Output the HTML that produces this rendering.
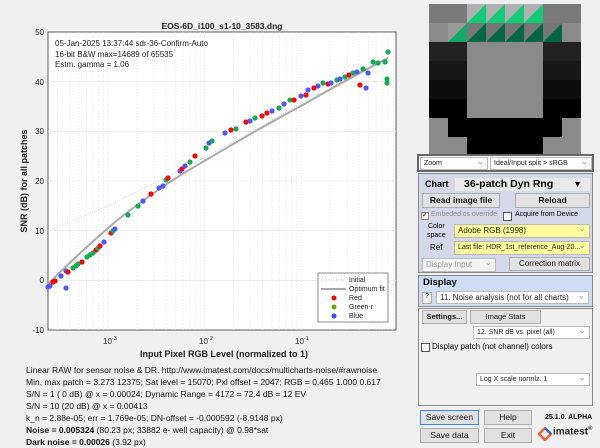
<!DOCTYPE html>
<html><head><meta charset="utf-8"><style>
*{box-sizing:border-box}
body{margin:0;width:600px;height:446px;background:#f0f0f0;font-family:"Liberation Sans",sans-serif;position:relative;overflow:hidden}
.a{position:absolute}
.dd{position:absolute;background:#fff;border:1px solid #bbb;font-size:8px;line-height:12px;padding-left:3px;color:#222}
.dd:after{content:"⌄";position:absolute;right:3px;top:-3px;color:#999;font-size:9px}
.yl{background:#ffff9e}
.btn{position:absolute;background:#e1e1e1;border:1px solid #adadad;font-size:8.5px;text-align:center;color:#111}
.t{font-size:8.5px;color:#111;line-height:10.5px}
</style></head><body>
<svg class="a" style="left:0;top:0" width="410" height="360" font-family="Liberation Sans, sans-serif">
<rect x="48" y="32" width="348" height="298" fill="#fff" stroke="#333" stroke-width="0.8"/>
<g stroke="#e2e2e2" stroke-width="0.6">
<line x1="48" x2="396" y1="81.7" y2="81.7"/><line x1="48" x2="396" y1="131.3" y2="131.3"/><line x1="48" x2="396" y1="181" y2="181"/><line x1="48" x2="396" y1="230.7" y2="230.7"/><line x1="48" x2="396" y1="280.3" y2="280.3"/>
</g>
<g stroke="#e2e2e2" stroke-width="0.6" stroke-dasharray="1.5,1.5" id="vg"></g>
<g font-size="8" fill="#222" text-anchor="end">
<text x="44" y="35">50</text><text x="44" y="85">40</text><text x="44" y="134">30</text><text x="44" y="184">20</text><text x="44" y="234">10</text><text x="44" y="283">0</text><text x="44" y="333">-10</text>
</g>
<g font-size="8" fill="#222">
<text x="103" y="344">10<tspan font-size="5.5" dy="-4">-3</tspan></text>
<text x="199" y="344">10<tspan font-size="5.5" dy="-4">-2</tspan></text>
<text x="295" y="344">10<tspan font-size="5.5" dy="-4">-1</tspan></text>
</g>
<text x="222" y="29" font-size="8.5" font-weight="bold" text-anchor="middle" fill="#222">EOS-6D_i100_s1-10_3583.dng</text>
<text x="224" y="357" font-size="9" font-weight="bold" text-anchor="middle" fill="#222">Input Pixel RGB Level (normalized to 1)</text>
<text transform="translate(27,181) rotate(-90)" font-size="9" font-weight="bold" text-anchor="middle" fill="#222">SNR (dB) for all patches</text>
<g font-size="8" fill="#222"><text x="55" y="46">05-Jan-2025 13:37:44   sdr-36-Confirm-Auto</text><text x="55" y="57">16-bit B&amp;W  max=14689 of 65535</text><text x="55" y="67">Estm. gamma = 1.06</text></g>
<path d="M53,229 L110,205 L206,157 L301,104 L388,57" fill="none" stroke="#bbb" stroke-width="0.7" stroke-dasharray="1,1.5"/>
<path d="M48,284 Q80,252 115,222 Q160,186 206,160 Q260,128 301,106 Q350,78 388,58" fill="none" stroke="#aaa" stroke-width="2"/>
<g id="pts"></g>
<rect x="318" y="273" width="70" height="49" fill="#fff" stroke="#444" stroke-width="0.6"/>
<line x1="321" x2="346" y1="280" y2="280" stroke="#bbb" stroke-dasharray="1,1.5"/>
<line x1="321" x2="346" y1="289" y2="289" stroke="#aaa" stroke-width="2"/>
<circle cx="334" cy="298" r="2.5" fill="#f00"/><circle cx="334" cy="307" r="2.5" fill="#6a0"/><circle cx="334" cy="316" r="2.5" fill="#44f"/>
<g font-size="7" fill="#222"><text x="349" y="282">Initial</text><text x="349" y="291">Optimum fit</text><text x="349" y="300">Red</text><text x="349" y="309">Green-r</text><text x="349" y="318">Blue</text></g>
</svg>
<script>
var g=document.getElementById('vg'),s='';
for(var d=-4;d<0;d++)for(var m=1;m<10;m++){var x=108+(d+3+Math.log10(m))*96.5;if(x>48&&x<396)s+='<line x1="'+x+'" x2="'+x+'" y1="32" y2="330"/>';}
g.innerHTML=s;
var P=[[48,287,'b'],[50,286,'b'],[53,282,'r'],[55,281,'r'],[61,276,'b'],[66,271,'b'],[66,288,'b'],[68,272,'r'],[73,268,'g'],[76,266,'g'],[78,264,'g'],[82,262,'r'],[87,257,'g'],[90,255,'g'],[93,253,'g'],[96,250,'r'],[98,248,'g'],[100,246,'r'],[104,242,'b'],[111,233,'r'],[113,231,'g'],[115,229,'b'],[128,215,'g'],[138,206,'g'],[143,201,'b'],[151,194,'r'],[159,188,'b'],[163,186,'b'],[166,180,'g'],[168,178,'r'],[180,171,'b'],[182,169,'r'],[185,166,'b'],[190,162,'g'],[195,156,'r'],[206,148,'g'],[209,143,'b'],[212,141,'g'],[225,133,'b'],[231,130,'r'],[236,129,'g'],[246,122,'r'],[250,121,'b'],[255,118,'g'],[262,116,'r'],[267,113,'r'],[272,111,'b'],[279,108,'g'],[284,104,'b'],[290,100,'g'],[294,100,'r'],[301,96,'b'],[306,95,'r'],[308,90,'b'],[314,88,'r'],[318,86,'b'],[323,83,'g'],[328,84,'r'],[331,83,'b'],[337,80,'g'],[340,79,'b'],[345,77,'g'],[349,75,'r'],[353,73,'g'],[357,72,'b'],[360,85,'r'],[363,69,'g'],[366,88,'b'],[368,73,'b'],[373,62,'g'],[378,63,'g'],[385,62,'g'],[388,52,'g'],[387,79,'g'],[387,83,'g']];
var c={r:'#f00',g:'#1a5',b:'#55f'},h='';
P.forEach(function(p){h+='<circle cx="'+p[0]+'" cy="'+p[1]+'" r="2.6" fill="'+c[p[2]]+'"/>';});
document.getElementById('pts').innerHTML=h;
</script>
<div class="a t" style="left:26px;top:364px;line-height:12px">Linear RAW for sensor noise &amp; DR.  http://www.imatest.com/docs/multicharts-noise/#rawnoise<br>Min, max patch = 3.273  12375;   Sat level = 15070;   Pxl offset = 2047;   RGB = 0.465  1.000  0.617<br>S/N =  1   ( 0 dB) @ x = 0.00024;   Dynamic Range = 4172 = 72.4 dB = 12 EV<br>S/N = 10 (20 dB) @ x = 0.00413<br>k_n = 2.88e-05;     err = 1.769e-05;     DN-offset = -0.000592 (-8.9148 px)<br><b>Noise = 0.005324</b> (80.23 px;  33882 e- well capacity) @ 0.98*sat<br><b>Dark noise = 0.00026</b> (3.92 px)</div>

<svg class="a" style="left:429px;top:4px" width="152" height="151">
<rect width="152" height="151" fill="#000"/>
<g fill="#7a7a7a"><rect x="0" y="0" width="38" height="19"/><rect x="114" y="0" width="38" height="19"/><rect x="0" y="19" width="19" height="19" fill="#8a8a8a"/><rect x="133" y="19" width="19" height="19" fill="#8a8a8a"/><rect x="38" y="38" width="76" height="76" fill="#8a8a8a"/><rect x="0" y="114" width="19" height="38" fill="#8a8a8a"/><rect x="133" y="114" width="19" height="38" fill="#8a8a8a"/><rect x="19" y="133" width="19" height="19" fill="#8a8a8a"/><rect x="114" y="133" width="19" height="19" fill="#8a8a8a"/></g>
<g id="tri"></g>
<g fill="#222"><rect x="0" y="38" width="38" height="19"/><rect x="114" y="38" width="38" height="19"/><rect x="0" y="57" width="38" height="19" fill="#181818"/><rect x="114" y="57" width="38" height="19" fill="#181818"/><rect x="0" y="76" width="38" height="19" fill="#0d0d0d"/><rect x="114" y="76" width="38" height="19" fill="#0d0d0d"/></g>
</svg>
<script>
var t='';
for(var i=2;i<6;i++)t+='<rect x="'+(i*19)+'" y="0" width="19" height="19" fill="#b0b0b0"/><path d="M'+(i*19)+',19 L'+(i*19+19)+',0 L'+(i*19+19)+',19Z" fill="#1c7"/>';
for(var i=1;i<7;i++)t+='<rect x="'+(i*19)+'" y="19" width="19" height="19" fill="'+(i==1?'#999':'#777')+'"/><path d="M'+(i*19)+',38 L'+(i*19+19)+',19 L'+(i*19+19)+',38Z" fill="'+(i==1?'#1a6':'#064')+'"/>';
document.getElementById('tri').innerHTML=t;
</script>

<div class="a" style="left:417px;top:154px;width:177px;height:18px;border:2px solid #666;background:#fff"></div>
<div class="dd" style="left:420px;top:157px;width:68px;height:13px;font-size:7px">Zoom</div>
<div class="dd" style="left:490px;top:157px;width:102px;height:13px;font-size:7px">Ideal/Input split &gt; sRGB</div>

<div class="a" style="left:418px;top:173px;width:175px;height:100px;background:#d5d8ea;border:1px solid #888"></div>
<div class="a" style="left:425px;top:179px;font-size:9px;font-weight:bold">Chart</div>
<div class="a" style="left:455px;top:178px;width:135px;height:13px;background:#e9e9e9;font-size:10.5px;font-weight:bold;padding-left:9px;line-height:13px">36-patch Dyn Rng<span style="position:absolute;right:8px;font-size:9px">▼</span></div>
<div class="btn" style="left:422px;top:193px;width:78px;height:15px;font-weight:bold;line-height:13px">Read image file</div>
<div class="btn" style="left:515px;top:193px;width:75px;height:15px;font-weight:bold;line-height:13px">Reload</div>
<div class="a" style="left:421px;top:212px;width:8px;height:8px;border:1px solid #888;background:#fff;font-size:7px;line-height:6px">✓</div>
<div class="a" style="left:431px;top:211px;font-size:7px;color:#888">Embeded cs override</div>
<div class="a" style="left:503px;top:212px;width:9px;height:9px;border:1px solid #555;background:#fff"></div>
<div class="a" style="left:515px;top:211px;font-size:7px">Acquire from Device</div>
<div class="a" style="left:427px;top:222px;font-size:7px;text-align:center;line-height:9px">Color<br>space</div>
<div class="dd yl" style="left:454px;top:224px;width:136px;height:14px;font-size:8px">Adobe RGB (1998)</div>
<div class="a" style="left:430px;top:243px;font-size:8px">Ref</div>
<div class="dd yl" style="left:454px;top:241px;width:136px;height:14px;font-size:7px">Last file: HDR_1st_reference_Aug-20...</div>
<div class="dd" style="left:422px;top:258px;width:74px;height:14px;color:#999;background:#f4f4f4">Display Input</div>
<div class="btn" style="left:509px;top:257px;width:81px;height:14px;line-height:12px;font-size:8px">Correction matrix</div>

<div class="a" style="left:418px;top:275px;width:175px;height:32px;background:#cfdcf5;border:1px solid #888"></div>
<div class="a" style="left:423px;top:277px;font-size:9.5px;font-weight:bold">Display</div>
<div class="btn" style="left:422px;top:292px;width:10px;height:12px;font-size:7px;background:#eee">?</div>
<div class="dd" style="left:436px;top:291px;width:153px;height:13px">11. Noise analysis (not for all charts)</div>

<div class="a" style="left:418px;top:308px;width:175px;height:98px;background:#f0f0f0;border:1px solid #888"></div>
<div class="btn" style="left:422px;top:310px;width:45px;height:14px;font-weight:bold;font-size:7.5px;line-height:12px">Settings...</div>
<div class="btn" style="left:470px;top:310px;width:71px;height:14px;font-size:7.5px;line-height:12px">Image Stats</div>
<div class="dd" style="left:473px;top:326px;width:117px;height:13px;font-size:7px">12. SNR dB vs. pixel (all)</div>
<div class="a" style="left:421px;top:343px;width:9px;height:9px;border:1px solid #555;background:#fff"></div>
<div class="a" style="left:432px;top:342px;font-size:8px">Display patch (not channel) colors</div>
<div class="dd" style="left:476px;top:373px;width:114px;height:13px;font-size:7px">Log X scale normlz. 1</div>

<div class="btn" style="left:420px;top:410px;width:59px;height:15px;border-color:#3a8adf;line-height:13px">Save screen</div>
<div class="btn" style="left:484px;top:410px;width:48px;height:15px;line-height:13px">Help</div>
<div class="btn" style="left:420px;top:428px;width:59px;height:15px;line-height:13px">Save data</div>
<div class="btn" style="left:484px;top:428px;width:48px;height:15px;line-height:13px">Exit</div>
<div class="a" style="left:545px;top:414px;font-size:7px;font-weight:bold">25.1.0. ALPHA</div>
<svg class="a" style="left:538px;top:427px" width="14" height="14"><path d="M7,1 L13,7 L7,13 L1,7Z" fill="none" stroke="#e63" stroke-width="2.5"/><path d="M7,1 L13,7" stroke="#36c" stroke-width="2.5"/></svg>
<div class="a" style="left:553px;top:426px;font-size:10px;font-weight:bold;color:#222">imatest<sup style="font-size:6px">®</sup></div>
</body></html>
